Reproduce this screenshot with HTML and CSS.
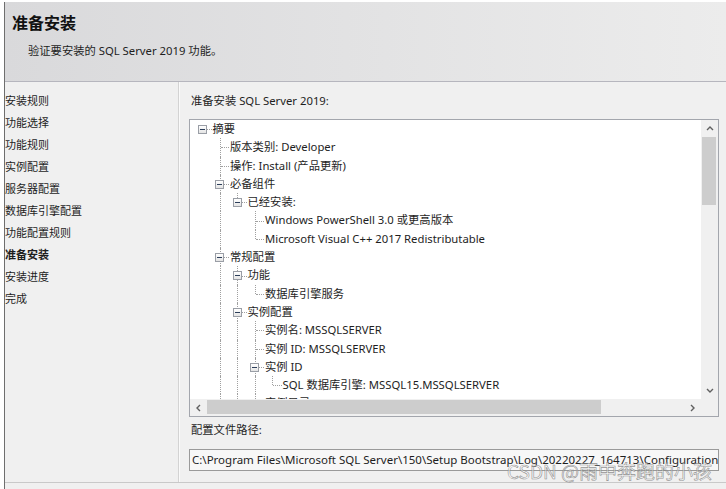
FILE: index.html
```html
<!doctype html>
<html lang="zh-CN">
<head>
    <meta charset="UTF-8">
    <title>SQL Server 2019 安装程序</title>
    <link rel="stylesheet" href="styles.css">
</head>
<body>

<div class="window">
    <div class="header">
        <h1 class="title">准备安装</h1>
        <p class="subtitle">验证要安装的 SQL Server 2019 功能。</p>
    </div>

    <div class="main">
        <ul class="steps">
            <li>安装规则</li>
            <li>功能选择</li>
            <li>功能规则</li>
            <li>实例配置</li>
            <li>服务器配置</li>
            <li>数据库引擎配置</li>
            <li>功能配置规则</li>
            <li class="current">准备安装</li>
            <li>安装进度</li>
            <li>完成</li>
        </ul>

        <div class="content">
            <div class="label">准备安装 SQL Server 2019:</div>

            <div class="treebox">
                <div class="tree">
                    <div class="row"><span class="c root"><i class="box"></i></span><span class="txt">摘要</span></div>
                    <div class="row"><span class="c"></span><span class="c t"></span><span class="txt">版本类别: Developer</span></div>
                    <div class="row"><span class="c"></span><span class="c t"></span><span class="txt">操作: Install (产品更新)</span></div>
                    <div class="row"><span class="c"></span><span class="c t"><i class="box"></i></span><span class="txt">必备组件</span></div>
                    <div class="row"><span class="c"></span><span class="c v"></span><span class="c l"><i class="box"></i></span><span class="txt">已经安装:</span></div>
                    <div class="row"><span class="c"></span><span class="c v"></span><span class="c"></span><span class="c t"></span><span class="txt">Windows PowerShell 3.0 或更高版本</span></div>
                    <div class="row"><span class="c"></span><span class="c v"></span><span class="c"></span><span class="c l"></span><span class="txt">Microsoft Visual C++ 2017 Redistributable</span></div>
                    <div class="row"><span class="c"></span><span class="c t"><i class="box"></i></span><span class="txt">常规配置</span></div>
                    <div class="row"><span class="c"></span><span class="c v"></span><span class="c t"><i class="box"></i></span><span class="txt">功能</span></div>
                    <div class="row"><span class="c"></span><span class="c v"></span><span class="c v"></span><span class="c l"></span><span class="txt">数据库引擎服务</span></div>
                    <div class="row"><span class="c"></span><span class="c v"></span><span class="c t"><i class="box"></i></span><span class="txt">实例配置</span></div>
                    <div class="row"><span class="c"></span><span class="c v"></span><span class="c v"></span><span class="c t"></span><span class="txt">实例名: MSSQLSERVER</span></div>
                    <div class="row"><span class="c"></span><span class="c v"></span><span class="c v"></span><span class="c t"></span><span class="txt">实例 ID: MSSQLSERVER</span></div>
                    <div class="row"><span class="c"></span><span class="c v"></span><span class="c v"></span><span class="c t"><i class="box"></i></span><span class="txt">实例 ID</span></div>
                    <div class="row"><span class="c"></span><span class="c v"></span><span class="c v"></span><span class="c v"></span><span class="c l"></span><span class="txt">SQL 数据库引擎: MSSQL15.MSSQLSERVER</span></div>
                    <div class="row"><span class="c"></span><span class="c v"></span><span class="c v"></span><span class="c t"></span><span class="txt">实例目录: C:\Program Files\Microsoft SQL Server\</span></div>
                </div>
                <div class="vscroll">
                    <span class="arrow"><svg width="8" height="5" viewBox="0 0 8 5"><path d="M1 4 L4 1 L7 4" fill="none" stroke="#606060" stroke-width="1.4"/></svg></span>
                    <div class="track"><div class="thumb"></div></div>
                    <span class="arrow"><svg width="8" height="5" viewBox="0 0 8 5"><path d="M1 1 L4 4 L7 1" fill="none" stroke="#606060" stroke-width="1.4"/></svg></span>
                </div>
                <div class="hscroll">
                    <span class="arrow"><svg width="5" height="8" viewBox="0 0 5 8"><path d="M4 1 L1 4 L4 7" fill="none" stroke="#606060" stroke-width="1.4"/></svg></span>
                    <div class="track"><div class="thumb"></div></div>
                    <span class="arrow"><svg width="5" height="8" viewBox="0 0 5 8"><path d="M1 1 L4 4 L1 7" fill="none" stroke="#606060" stroke-width="1.4"/></svg></span>
                </div>
                <div class="corner"></div>
            </div>

            <div class="label path-label">配置文件路径:</div>
            <div class="pathbox">C:\Program Files\Microsoft SQL Server\150\Setup Bootstrap\Log\20220227_164713\ConfigurationFile.ini</div>
        </div>
    </div>

    <div class="footer"></div>
    <div class="watermark">CSDN @雨中奔跑的小孩</div>
</div>

</body>
</html>
```

FILE: styles.css
```css
body {
    margin: 0;
    padding: 0;
    background: #fff;
    font-family: "Noto Sans", "Noto Sans CJK SC", sans-serif;
    font-size: 11.3px;
    color: #1e1e1e;
}

.window {
    position: relative;
    margin: 2px 0 0 4px;
    height: 487px;
    border-left: 1px solid #6e6e6e;
    background: #f0f0f0;
    display: flex;
    flex-direction: column;
    overflow: hidden;
}

/* header */

.header {
    height: 79px;
    flex: none;
    background: linear-gradient(to right, #d9d9db, #ececec);
    border-bottom: 1px solid #b6b6be;
}

.title {
    margin: 0;
    padding: 10px 0 0 7px;
    font-size: 16px;
    line-height: 22px;
    font-weight: bold;
    color: #111;
}

.subtitle {
    margin: 0;
    padding: 9px 0 0 23px;
    font-size: 11.3px;
    line-height: 16px;
}

/* main */

.main {
    display: flex;
    height: 400px;
    flex: none;
}

.steps {
    list-style: none;
    margin: 0;
    padding: 8px 0 0 0;
    width: 173px;
    flex: none;
    border-right: 1px solid #d3d3d3;
    box-shadow: 1px 0 0 #fafafa;
    font-size: 11px;
}

.steps li {
    line-height: 22px;
    height: 22px;
}

.steps .current {
    font-weight: bold;
}

.content {
    flex: 1;
    min-width: 0;
    padding: 11px 7px 0 10px;
    display: flex;
    flex-direction: column;
}

.label {
    line-height: 16px;
    height: 16px;
    padding-left: 2px;
}

/* tree view */

.treebox {
    margin-top: 10px;
    height: 298px;
    box-sizing: border-box;
    border: 1px solid #a3a6ad;
    background: #fff;
    display: grid;
    grid-template-columns: minmax(0, 1fr) 17px;
    grid-template-rows: minmax(0, 1fr) 17px;
}

.tree {
    overflow: hidden;
    padding-left: 4px;
    white-space: nowrap;
}

.row {
    display: flex;
    height: 18.3px;
    line-height: 18.3px;
}

.c {
    position: relative;
    width: 17.5px;
    flex: none;
    display: flex;
    align-items: center;
    justify-content: center;
}

.c.v::before,
.c.t::before,
.c.l::before {
    content: '';
    position: absolute;
    left: 8px;
    top: 0;
    bottom: 0;
    border-left: 1px dotted #a0a0a0;
}

.c.l::before {
    bottom: 50%;
}

.c.t::after,
.c.l::after,
.c.root::after {
    content: '';
    position: absolute;
    left: 9px;
    right: 0;
    top: 50%;
    border-top: 1px dotted #a0a0a0;
}

.box {
    position: relative;
    z-index: 1;
    width: 7px;
    height: 7px;
    margin-right: 1px;
    border: 1px solid #9a9ea6;
    background: linear-gradient(#fff, #e4e4e4);
}

.box::before {
    content: '';
    position: absolute;
    left: 1px;
    right: 1px;
    top: 3px;
    height: 1px;
    background: #2c3e5a;
}

.txt {
    padding-left: 1px;
}

/* scrollbars */

.vscroll,
.hscroll {
    background: #f0f0f0;
    display: flex;
    min-width: 0;
    min-height: 0;
}

.vscroll {
    flex-direction: column;
}

.arrow {
    width: 17px;
    height: 17px;
    flex: none;
    display: flex;
    align-items: center;
    justify-content: center;
}

.track {
    flex: 1;
    display: flex;
}

.vscroll .thumb {
    width: 14px;
    height: 68px;
    margin-left: 1px;
    background: #cdcdcd;
}

.hscroll .thumb {
    width: 394px;
    height: 14px;
    margin-top: 1px;
    background: #cdcdcd;
}

.corner {
    background: #f0f0f0;
}

/* config file path */

.path-label {
    margin-top: 5px;
}

.pathbox {
    margin-top: 11px;
    height: 22px;
    box-sizing: border-box;
    border: 1px solid #9a9a9a;
    background: #f7f7f7;
    padding-left: 2px;
    line-height: 20px;
    white-space: nowrap;
    overflow: hidden;
    font-size: 11.5px;
}

.footer {
    flex: 1;
    border-top: 1px solid #c9c9c9;
}

.watermark {
    position: absolute;
    right: 14px;
    bottom: 7px;
    font-family: "Noto Sans CJK SC", sans-serif;
    font-size: 19px;
    line-height: 22px;
    color: rgba(255, 255, 255, 0.55);
    -webkit-text-stroke: 0.6px rgba(110, 110, 110, 0.75);
    white-space: nowrap;
}
```
